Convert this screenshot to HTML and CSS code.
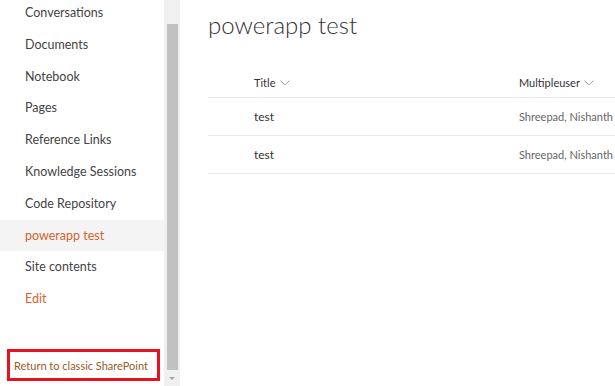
FILE: index.html
```html
<!DOCTYPE html>
<html lang="en">
<head>
  <meta charset="UTF-8">
  <title>powerapp test</title>
  <link rel="stylesheet" href="styles.css">
</head>
<body>
  <div class="page">
    <nav class="sidebar">
      <ul class="nav-list">
        <li class="nav-item">Conversations</li>
        <li class="nav-item">Documents</li>
        <li class="nav-item">Notebook</li>
        <li class="nav-item">Pages</li>
        <li class="nav-item">Reference Links</li>
        <li class="nav-item">Knowledge Sessions</li>
        <li class="nav-item">Code Repository</li>
        <li class="nav-item selected">powerapp test</li>
        <li class="nav-item">Site contents</li>
        <li class="nav-item edit">Edit</li>
      </ul>
      <div class="classic-box">
        <a class="classic-link">Return to classic SharePoint</a>
      </div>
    </nav>

    <div class="scrollbar">
      <div class="scroll-thumb"></div>
      <div class="scroll-arrow"></div>
    </div>

    <main class="content">
      <h1 class="list-title">powerapp test</h1>
      <div class="list">
        <div class="list-row list-header">
          <div class="cell cell-icon"></div>
          <div class="cell cell-title">Title <svg class="chevron" viewBox="0 0 10 6" width="10" height="6"><path d="M0.5 0.5 L5 5 L9.5 0.5" fill="none" stroke="#a6a6a6" stroke-width="1"/></svg></div>
          <div class="cell cell-user">Multipleuser <svg class="chevron" viewBox="0 0 10 6" width="10" height="6"><path d="M0.5 0.5 L5 5 L9.5 0.5" fill="none" stroke="#a6a6a6" stroke-width="1"/></svg></div>
        </div>
        <div class="list-row">
          <div class="cell cell-icon"></div>
          <div class="cell cell-title">test</div>
          <div class="cell cell-user">Shreepad, Nishanth <span class="presence"></span></div>
        </div>
        <div class="list-row">
          <div class="cell cell-icon"></div>
          <div class="cell cell-title">test</div>
          <div class="cell cell-user">Shreepad, Nishanth <span class="presence"></span></div>
        </div>
      </div>
    </main>
  </div>
</body>
</html>
```

FILE: styles.css
```css
:root {
  --text-primary: #333333;
  --text-nav: #444444;
  --text-secondary: #666666;
  --accent: #d4632c;
  --border: #eaeaea;
  --selected: #f4f4f4;
}

html, body {
  margin: 0;
  padding: 0;
  height: 100%;
  overflow: hidden;
  background-color: #ffffff;
}

body {
  font-family: 'Lato', 'Open Sans', sans-serif;
  color: var(--text-primary);
}

.page {
  display: flex;
  height: 386px;
}

.sidebar {
  width: 164px;
  flex-shrink: 0;
  display: flex;
  flex-direction: column;
}

.nav-list {
  list-style: none;
  margin: -3px 0 0 0;
  padding: 0;
}

.nav-item {
  height: 31.8px;
  line-height: 31.8px;
  padding-left: 25px;
  font-size: 12.5px;
  color: var(--text-nav);
  white-space: nowrap;
}

.nav-item.selected {
  background-color: var(--selected);
  color: var(--accent);
}

.nav-item.edit {
  color: var(--accent);
}

.classic-box {
  margin: auto 4px 5px 7px;
  height: 26px;
  border: 3px solid #e8121f;
  display: flex;
  align-items: center;
  padding-left: 4px;
}

.classic-link {
  font-size: 11px;
  color: #9a5a24;
  white-space: nowrap;
}

.scrollbar {
  width: 16px;
  flex-shrink: 0;
  background-color: #f0f0f0;
  display: flex;
  flex-direction: column;
  align-items: center;
  padding-top: 24px;
  box-sizing: border-box;
}

.scroll-thumb {
  width: 11px;
  height: 346px;
  background-color: #c1c1c1;
}

.scroll-arrow {
  margin-top: 7px;
  width: 0;
  height: 0;
  border-left: 3px solid transparent;
  border-right: 3px solid transparent;
  border-top: 3px solid #a3a3a3;
}

.content {
  flex: 1;
  min-width: 0;
  padding-left: 28px;
  overflow: hidden;
}

.list-title {
  margin: 9px 0 0 0;
  font-size: 24px;
  font-weight: 300;
  color: var(--text-primary);
  line-height: 31px;
  white-space: nowrap;
}

.list {
  margin-top: 24px;
}

.list-row {
  display: flex;
  align-items: center;
  height: 37px;
  border-bottom: 1px solid var(--border);
  white-space: nowrap;
}

.list-header {
  height: 30px;
  padding-top: 3px;
}

.cell-icon {
  width: 46px;
  flex-shrink: 0;
}

.cell-title {
  width: 265px;
  flex-shrink: 0;
  font-size: 12px;
  color: var(--text-primary);
}

.cell-user {
  font-size: 11px;
  color: var(--text-secondary);
}

.list-header .cell {
  font-size: 11px;
  color: var(--text-primary);
}

.chevron {
  margin-left: 2px;
  vertical-align: 1px;
}

.presence {
  display: inline-block;
  width: 6px;
  height: 10px;
  border-radius: 3px;
  background-color: #f2c98f;
  vertical-align: -1px;
}
```
